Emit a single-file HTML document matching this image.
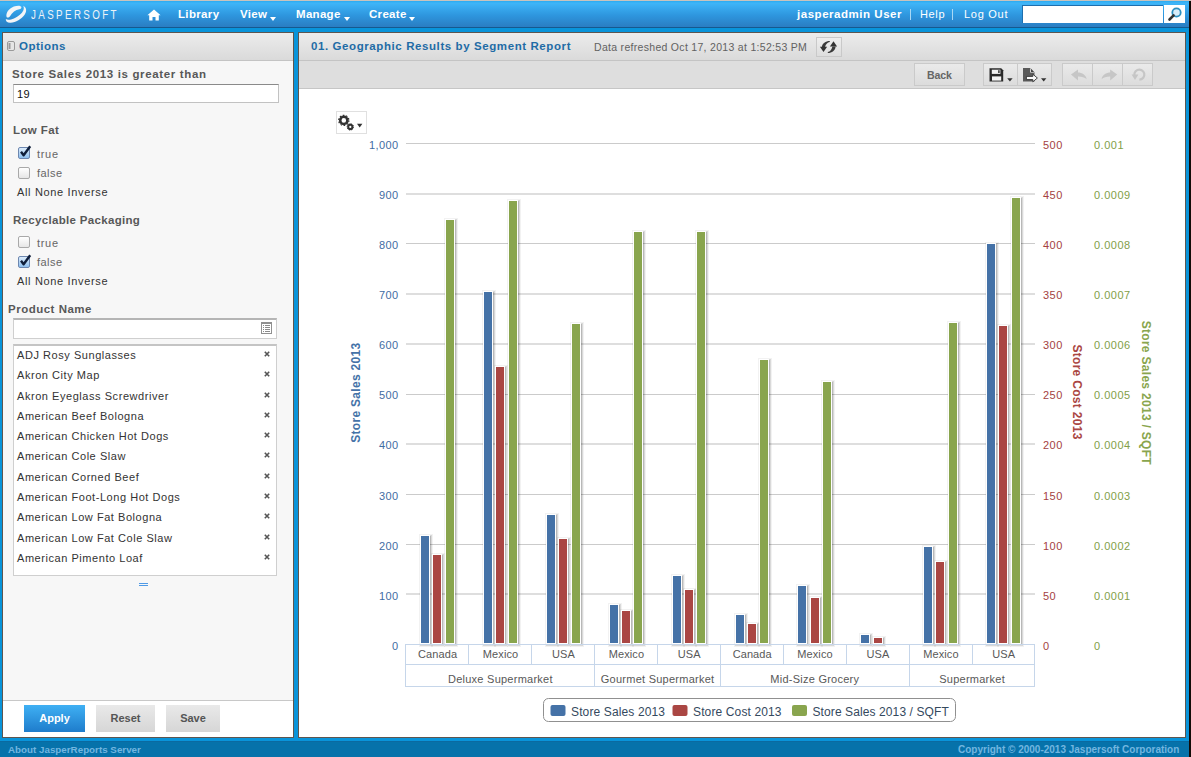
<!DOCTYPE html>
<html><head><meta charset="utf-8">
<style>
*{box-sizing:border-box}
html,body{margin:0;padding:0}
body{width:1191px;height:757px;overflow:hidden;position:relative;background:#0994da;font-family:"Liberation Sans",sans-serif;}
.a{position:absolute;white-space:nowrap}
#topline{left:0;top:0;width:1191px;height:1px;background:#c9c3bd}
#topbar{left:0;top:1px;width:1191px;height:26px;background:linear-gradient(#2aaaf0,#3fb5f8 8%,#2e96de 55%,#2a7dc2)}
#topdark{left:0;top:27px;width:1191px;height:1px;background:#15598f}
#rstrip{left:1189px;top:1px;width:2px;height:756px;background:#120c08}
#footer{left:0;top:742px;width:1189px;height:15px;background:#0672aa}
#footline{left:0;top:741px;width:1189px;height:1px;background:#0b6aa0}
.nav{color:#fff;font-weight:700;font-size:11.5px;top:8px;line-height:12px}
.panel{border:1px solid #5d5650;background:#f7f7f7}
.phdr{left:0;top:0;right:0;height:28px;background:linear-gradient(#ececec,#dadada);border-bottom:1px solid #c4c4c4}
.lbl{color:#585858;font-weight:700;font-size:11.5px;line-height:12px}
.opt{color:#666;font-size:11px;line-height:12px}
.ani{color:#333;font-size:11px;line-height:12px;letter-spacing:0.66px}
.cb{width:12px;height:12px;border:1px solid #a9a9a9;border-radius:2px;background:linear-gradient(#fff,#e6e6e6)}
.cbc{background:linear-gradient(#dcecfb,#8fc0ef);border-color:#6d87b0}
.item{color:#333;font-size:11px;line-height:12px;left:17px}
.tri{width:0;height:0;border-left:3px solid transparent;border-right:3px solid transparent;border-top:4px solid #fff}
.btn{font-weight:700;font-size:11px;line-height:27px;text-align:center;letter-spacing:0}
.x{left:264px;width:6px;height:6px}
</style></head><body>
<div class="a" id="topline"></div>
<div class="a" id="topbar"></div>
<div class="a" id="topdark"></div>
<div class="a" id="footline"></div>
<div class="a" id="footer"></div>
<div class="a" id="rstrip"></div>

<!-- logo -->
<svg class="a" style="left:0;top:0" width="30" height="26" viewBox="0 0 30 26">
<path d="M6.6 17 C5.6 13 8.6 8.8 13.8 6.6 C17 5.4 20.2 5.2 21.3 6.8 C21.8 8.4 20.6 9 19.4 9.2 C15.6 9.8 12 12.4 10 16.2 C9.2 17.6 7.2 18 6.6 17 Z" fill="#f3f5f7"/>
<path d="M23.2 5.8 C26.4 7.2 27.2 11 24.6 14.8 C21.6 19 15.8 22.4 10.6 22.8 C7.4 23 5.6 21.4 5.8 19 C7.5 20 10.5 19.8 14 18.4 C18.5 16.6 22 13.4 23.3 10.5 C24 8.8 24 7 23.2 5.8 Z" fill="#f3f5f7"/>
</svg>
<div class="a" style="left:31px;top:7px;color:#eef3f7;font-size:13.6px;letter-spacing:3.3px;line-height:16px;font-weight:400;transform:scaleX(0.72);transform-origin:0 0">JASPERSOFT</div>


<!-- nav -->
<svg class="a" style="left:147px;top:9px" width="14" height="12" viewBox="0 0 14 12">
<path d="M7 0.5 L13.6 6.2 L11.8 6.2 L11.8 11.5 L8.5 11.5 L8.5 8 L5.5 8 L5.5 11.5 L2.2 11.5 L2.2 6.2 L0.4 6.2 Z" fill="#fff"/>
</svg>
<div class="a nav" style="left:178px;letter-spacing:0.35px">Library</div>
<div class="a nav" style="left:240px;letter-spacing:0.3px">View</div>
<div class="a tri" style="left:270px;top:17px"></div>
<div class="a nav" style="left:296px;letter-spacing:0.3px">Manage</div>
<div class="a tri" style="left:344px;top:17px"></div>
<div class="a nav" style="left:369px;letter-spacing:0.3px">Create</div>
<div class="a tri" style="left:409px;top:17px"></div>
<div class="a nav" style="left:797px;letter-spacing:0.53px">jasperadmin User</div>
<div class="a" style="left:910px;top:9px;width:1px;height:11px;background:#a9d8f5"></div>
<div class="a nav" style="left:920px;font-weight:400;font-size:11px;letter-spacing:0.63px">Help</div>
<div class="a" style="left:952px;top:9px;width:1px;height:11px;background:#a9d8f5"></div>
<div class="a nav" style="left:964px;font-weight:400;font-size:11px;letter-spacing:0.73px">Log Out</div>
<div class="a" style="left:1022px;top:5px;width:141px;height:18px;background:#fff;border:1px solid #1e6fae;border-width:1px 0 0 1px"></div>
<div class="a" style="left:1164px;top:5px;width:21px;height:18px;background:#fff"></div>
<svg class="a" style="left:1167px;top:7px" width="16" height="15" viewBox="0 0 16 15">
<circle cx="9.5" cy="5.5" r="4.2" fill="#d8ecf8" stroke="#2b8fc0" stroke-width="1.8"/>
<path d="M6.6 8.4 L2.5 12.5" stroke="#333" stroke-width="2.6" stroke-linecap="round"/>
</svg>

<!-- left panel -->
<div class="a panel" style="left:2px;top:32px;width:292px;height:706px">
  <div class="a phdr"></div>
  <div class="a" style="left:0;top:667px;width:290px;height:37px;background:#fff;border-top:1px solid #c8c8c8"></div>
</div>
<svg class="a" style="left:7px;top:41px" width="8" height="10" viewBox="0 0 8 10">
<rect x="0.5" y="0.5" width="7" height="9" rx="1.5" fill="#e6e6e6" stroke="#9a9a9a"/>
<rect x="1.5" y="2" width="2" height="6" fill="#9a9a9a"/>
</svg>
<div class="a" style="left:19px;top:40px;color:#1b6ca8;font-weight:700;font-size:11.5px;line-height:12px;letter-spacing:0.5px">Options</div>
<div class="a lbl" style="left:12px;top:68px;letter-spacing:0.65px">Store Sales 2013 is greater than</div>
<div class="a" style="left:13px;top:84px;width:266px;height:19px;background:#fff;border:1px solid #c2c2c2;border-top-color:#8a8a8a"></div>
<div class="a" style="left:17px;top:88px;color:#111;font-size:11px;line-height:12px;letter-spacing:0.5px">19</div>

<div class="a lbl" style="left:13px;top:124px;letter-spacing:0.4px">Low Fat</div>
<div class="a cb cbc" style="left:18px;top:147px"></div>
<div class="a opt" style="left:37px;top:148px;letter-spacing:0.7px">true</div>
<div class="a cb" style="left:18px;top:167px"></div>
<div class="a opt" style="left:37px;top:167px;letter-spacing:0.45px">false</div>
<div class="a ani" style="left:17px;top:186px">All None Inverse</div>

<div class="a lbl" style="left:13px;top:214px;letter-spacing:0.32px">Recyclable Packaging</div>
<div class="a cb" style="left:18px;top:236px"></div>
<div class="a opt" style="left:37px;top:237px;letter-spacing:0.7px">true</div>
<div class="a cb cbc" style="left:18px;top:256px"></div>
<div class="a opt" style="left:37px;top:256px;letter-spacing:0.45px">false</div>
<div class="a ani" style="left:17px;top:275px">All None Inverse</div>

<div class="a lbl" style="left:8px;top:303px;letter-spacing:0.5px">Product Name</div>
<div class="a" style="left:13px;top:318px;width:264px;height:21px;background:#fff;border:1px solid #cfcfcf;border-top:2px solid #b5b5b5"></div>
<div class="a" style="left:13px;top:344px;width:264px;height:232px;background:#fff;border:1px solid #cfcfcf;border-top:2px solid #c4c4c4"></div>
<div class="a item" style="top:349px;letter-spacing:0.55px">ADJ Rosy Sunglasses</div>
<svg class="a x" style="top:351px" viewBox="0 0 6 6"><path d="M0.8 0.8 L5.2 5.2 M5.2 0.8 L0.8 5.2" stroke="#555" stroke-width="1.6"/></svg>
<div class="a item" style="top:369px;letter-spacing:0.55px">Akron City Map</div>
<svg class="a x" style="top:371px" viewBox="0 0 6 6"><path d="M0.8 0.8 L5.2 5.2 M5.2 0.8 L0.8 5.2" stroke="#555" stroke-width="1.6"/></svg>
<div class="a item" style="top:390px;letter-spacing:0.55px">Akron Eyeglass Screwdriver</div>
<svg class="a x" style="top:392px" viewBox="0 0 6 6"><path d="M0.8 0.8 L5.2 5.2 M5.2 0.8 L0.8 5.2" stroke="#555" stroke-width="1.6"/></svg>
<div class="a item" style="top:410px;letter-spacing:0.55px">American Beef Bologna</div>
<svg class="a x" style="top:412px" viewBox="0 0 6 6"><path d="M0.8 0.8 L5.2 5.2 M5.2 0.8 L0.8 5.2" stroke="#555" stroke-width="1.6"/></svg>
<div class="a item" style="top:430px;letter-spacing:0.55px">American Chicken Hot Dogs</div>
<svg class="a x" style="top:432px" viewBox="0 0 6 6"><path d="M0.8 0.8 L5.2 5.2 M5.2 0.8 L0.8 5.2" stroke="#555" stroke-width="1.6"/></svg>
<div class="a item" style="top:450px;letter-spacing:0.55px">American Cole Slaw</div>
<svg class="a x" style="top:452px" viewBox="0 0 6 6"><path d="M0.8 0.8 L5.2 5.2 M5.2 0.8 L0.8 5.2" stroke="#555" stroke-width="1.6"/></svg>
<div class="a item" style="top:471px;letter-spacing:0.55px">American Corned Beef</div>
<svg class="a x" style="top:473px" viewBox="0 0 6 6"><path d="M0.8 0.8 L5.2 5.2 M5.2 0.8 L0.8 5.2" stroke="#555" stroke-width="1.6"/></svg>
<div class="a item" style="top:491px;letter-spacing:0.55px">American Foot-Long Hot Dogs</div>
<svg class="a x" style="top:493px" viewBox="0 0 6 6"><path d="M0.8 0.8 L5.2 5.2 M5.2 0.8 L0.8 5.2" stroke="#555" stroke-width="1.6"/></svg>
<div class="a item" style="top:511px;letter-spacing:0.55px">American Low Fat Bologna</div>
<svg class="a x" style="top:513px" viewBox="0 0 6 6"><path d="M0.8 0.8 L5.2 5.2 M5.2 0.8 L0.8 5.2" stroke="#555" stroke-width="1.6"/></svg>
<div class="a item" style="top:532px;letter-spacing:0.55px">American Low Fat Cole Slaw</div>
<svg class="a x" style="top:534px" viewBox="0 0 6 6"><path d="M0.8 0.8 L5.2 5.2 M5.2 0.8 L0.8 5.2" stroke="#555" stroke-width="1.6"/></svg>
<div class="a item" style="top:552px;letter-spacing:0.55px">American Pimento Loaf</div>
<svg class="a x" style="top:554px" viewBox="0 0 6 6"><path d="M0.8 0.8 L5.2 5.2 M5.2 0.8 L0.8 5.2" stroke="#555" stroke-width="1.6"/></svg>

<div class="a" style="left:139px;top:583px;width:9px;height:1px;background:#4f9ae6"></div>
<div class="a" style="left:139px;top:585px;width:9px;height:1px;background:#4f9ae6"></div>
<div class="a btn" style="left:24px;top:705px;width:61px;height:27px;background:linear-gradient(#3fb0f4,#1e7ccb);color:#fff">Apply</div>
<div class="a btn" style="left:96px;top:705px;width:59px;height:27px;background:linear-gradient(#e9e9e9,#d6d6d6);color:#555">Reset</div>
<div class="a btn" style="left:166px;top:705px;width:54px;height:27px;background:linear-gradient(#e9e9e9,#d6d6d6);color:#555">Save</div>
<div class="a" style="left:8px;top:745px;color:#72b6e0;font-weight:700;font-size:9.8px;line-height:10px">About JasperReports Server</div>
<div class="a" style="left:958px;top:745px;color:#72b6e0;font-weight:700;font-size:10px;line-height:10px">Copyright © 2000-2013 Jaspersoft Corporation</div>

<!-- right panel -->
<div class="a panel" style="left:298px;top:32px;width:888px;height:706px;background:#fff">
  <div class="a phdr"></div>
  <div class="a" style="left:0;top:28px;width:886px;height:28px;background:#dedede;border-bottom:1px solid #c6c6c6"></div>
</div>
<div class="a" style="left:311px;top:40px;color:#1f6ca6;font-weight:700;font-size:11.5px;line-height:12px;letter-spacing:0.59px">01. Geographic Results by Segment Report</div>
<div class="a" style="left:594px;top:41px;color:#626262;font-size:10.5px;line-height:12px;letter-spacing:0.3px">Data refreshed Oct 17, 2013 at 1:52:53 PM</div>
<div class="a" style="left:816px;top:37px;width:26px;height:20px;border:1px solid #c9c9c9;background:linear-gradient(#eee,#ddd)"></div>
<div class="a" style="left:914px;top:63px;width:51px;height:23px;border:1px solid #cacaca;background:linear-gradient(#eaeaea,#dcdcdc)"></div>
<div class="a" style="left:927px;top:69px;color:#666;font-weight:700;font-size:10.6px;line-height:12px;letter-spacing:-0.15px">Back</div>
<div class="a" style="left:983px;top:63px;width:69px;height:23px;border:1px solid #cacaca;background:linear-gradient(#eaeaea,#dcdcdc)"></div>
<div class="a" style="left:1017px;top:64px;width:1px;height:21px;background:#cacaca"></div>
<div class="a" style="left:1062px;top:63px;width:91px;height:23px;border:1px solid #cacaca;background:linear-gradient(#eaeaea,#dcdcdc)"></div>
<div class="a" style="left:1092px;top:64px;width:1px;height:21px;background:#cacaca"></div>
<div class="a" style="left:1122px;top:64px;width:1px;height:21px;background:#cacaca"></div>
<div class="a" style="left:336px;top:111px;width:31px;height:23px;border:1px solid #e0e0e0;background:#fff"></div>

<!-- icons -->
<svg class="a" style="left:816px;top:37px" width="26" height="20" viewBox="0 0 26 20">
<path d="M13.8 4 C9.6 4 6.2 6.4 5.9 10 L9.1 10 C9.6 7.2 11.4 5.5 13.8 5 Z" fill="#3a3a3a"/>
<path d="M3.9 9.8 L11.1 9.8 L7.5 15 Z" fill="#333"/>
<path d="M11.8 15.9 C16 15.9 19.4 13.4 19.6 9.4 L16.4 9.4 C15.8 12.5 14.2 14.5 11.8 14.9 Z" fill="#3a3a3a"/>
<path d="M13.9 9.4 L21.1 9.4 L17.5 4.2 Z" fill="#333"/>
</svg>
<svg class="a" style="left:988px;top:67px" width="26" height="16" viewBox="0 0 26 16">
<path d="M1.5 1.2 L13.2 1.2 L15.2 3.2 L15.2 14.6 L1.5 14.6 Z" fill="#2a2a2a"/>
<rect x="3.8" y="2.7" width="8.6" height="4.2" fill="#f2f2f2"/>
<rect x="10.2" y="3.2" width="1.4" height="2.8" fill="#2a2a2a"/>
<rect x="4" y="9.4" width="9.2" height="4.2" fill="#f4f4f4"/>
<path d="M19.2 11.2 L24.6 11.2 L21.9 14.6 Z" fill="#333"/>
</svg>
<svg class="a" style="left:1022px;top:67px" width="26" height="16" viewBox="0 0 26 16">
<path d="M1 1 L8 1 L12.5 5.5 L12.5 14.6 L1 14.6 Z" fill="#5a5a5a"/>
<path d="M8.2 1.2 L12.6 5.6 L8.2 5.6 Z" fill="#fff"/>
<path d="M8.8 1.6 L12.2 5 L9 5 Z" fill="#444"/>
<path d="M4.4 9.4 L10.8 9.4 L10.8 7.2 L15.4 11 L10.8 14.8 L10.8 12.6 L4.4 12.6 Z" fill="#fafafa" stroke="#333" stroke-width="0.9"/>
<path d="M19 11.2 L24.4 11.2 L21.7 14.6 Z" fill="#333"/>
</svg>
<svg class="a" style="left:1066px;top:66px" width="24" height="18" viewBox="0 0 24 18">
<path d="M5 8.4 L12 3.4 L12 14.4 Z" fill="#c6c6c6"/>
<path d="M11 6.6 C16 6.4 19.8 8.8 20.6 13.2 C18.6 11.2 15.2 10.4 11 10.6 Z" fill="#c6c6c6"/>
</svg>
<svg class="a" style="left:1096px;top:66px" width="24" height="18" viewBox="0 0 24 18">
<path d="M21.2 8.4 L14.2 3.4 L14.2 14.4 Z" fill="#c6c6c6"/>
<path d="M15.2 6.6 C10.2 6.4 6.4 8.8 5.6 13.2 C7.6 11.2 11 10.4 15.2 10.6 Z" fill="#c6c6c6"/>
</svg>
<svg class="a" style="left:1126px;top:66px" width="24" height="18" viewBox="0 0 24 18">
<path d="M9.2 11.4 A5 5 0 1 1 13.4 13.6" fill="none" stroke="#c6c6c6" stroke-width="2.2"/>
<path d="M5.6 8.6 L12.4 8.6 L9 14 Z" fill="#c6c6c6"/>
</svg>
<svg class="a" style="left:336px;top:111px" width="31" height="23" viewBox="0 0 31 23">
<circle cx="7.8" cy="9.4" r="3.6" fill="none" stroke="#333" stroke-width="2.6"/>
<circle cx="7.8" cy="9.4" r="5.1" fill="none" stroke="#333" stroke-width="1.2" stroke-dasharray="1.6 1.6"/>
<circle cx="14.3" cy="15.9" r="2.1" fill="none" stroke="#333" stroke-width="2"/>
<circle cx="14.3" cy="15.9" r="3.2" fill="none" stroke="#333" stroke-width="1" stroke-dasharray="1.3 1.2"/>
<path d="M21 12.8 L26.4 12.8 L23.7 16.6 Z" fill="#333"/>
</svg>
<svg class="a" style="left:261px;top:322px" width="11" height="12" viewBox="0 0 11 12">
<rect x="0.5" y="0.5" width="10" height="11" fill="#fff" stroke="#909090"/>
<rect x="0" y="0" width="11" height="2" fill="#909090"/>
<g fill="#8a8a8a"><rect x="2" y="3" width="1" height="1"/><rect x="2" y="5" width="1" height="1"/><rect x="2" y="7" width="1" height="1"/><rect x="2" y="9" width="1" height="1"/>
<rect x="4" y="3" width="5" height="1"/><rect x="4" y="5" width="5" height="1"/><rect x="4" y="7" width="5" height="1"/><rect x="4" y="9" width="5" height="1"/></g>
</svg>
<svg class="a" style="left:17px;top:144px" width="16" height="16" viewBox="0 0 16 16"><path d="M4 7.8 L6.6 11.2 L13.2 2.2" fill="none" stroke="#0f1e3a" stroke-width="2.4" stroke-linejoin="round"/></svg>
<svg class="a" style="left:17px;top:253px" width="16" height="16" viewBox="0 0 16 16"><path d="M4 7.8 L6.6 11.2 L13.2 2.2" fill="none" stroke="#0f1e3a" stroke-width="2.4" stroke-linejoin="round"/></svg>
<!-- chart -->
<svg class="a" style="left:0;top:0" width="1191" height="757" viewBox="0 0 1191 757" font-family="Liberation Sans">
<line x1="406" y1="143.5" x2="1035" y2="143.5" stroke="#cbcbcb" stroke-width="1"/>
<line x1="406" y1="194.0" x2="1035" y2="194.0" stroke="#bdbdbd" stroke-width="1"/>
<line x1="406" y1="243.5" x2="1035" y2="243.5" stroke="#cbcbcb" stroke-width="1"/>
<line x1="406" y1="294.0" x2="1035" y2="294.0" stroke="#bdbdbd" stroke-width="1"/>
<line x1="406" y1="344.0" x2="1035" y2="344.0" stroke="#bdbdbd" stroke-width="1"/>
<line x1="406" y1="394.5" x2="1035" y2="394.5" stroke="#cbcbcb" stroke-width="1"/>
<line x1="406" y1="444.0" x2="1035" y2="444.0" stroke="#bdbdbd" stroke-width="1"/>
<line x1="406" y1="494.5" x2="1035" y2="494.5" stroke="#cbcbcb" stroke-width="1"/>
<line x1="406" y1="544.5" x2="1035" y2="544.5" stroke="#cbcbcb" stroke-width="1"/>
<line x1="406" y1="594.0" x2="1035" y2="594.0" stroke="#bdbdbd" stroke-width="1"/>
<text x="398.5" y="149.0" text-anchor="end" font-size="11" fill="#3f6ca3" letter-spacing="0.4">1,000</text>
<text x="398.5" y="199.08" text-anchor="end" font-size="11" fill="#3f6ca3" letter-spacing="0.4">900</text>
<text x="398.5" y="249.16" text-anchor="end" font-size="11" fill="#3f6ca3" letter-spacing="0.4">800</text>
<text x="398.5" y="299.24" text-anchor="end" font-size="11" fill="#3f6ca3" letter-spacing="0.4">700</text>
<text x="398.5" y="349.32" text-anchor="end" font-size="11" fill="#3f6ca3" letter-spacing="0.4">600</text>
<text x="398.5" y="399.4" text-anchor="end" font-size="11" fill="#3f6ca3" letter-spacing="0.4">500</text>
<text x="398.5" y="449.48" text-anchor="end" font-size="11" fill="#3f6ca3" letter-spacing="0.4">400</text>
<text x="398.5" y="499.56" text-anchor="end" font-size="11" fill="#3f6ca3" letter-spacing="0.4">300</text>
<text x="398.5" y="549.64" text-anchor="end" font-size="11" fill="#3f6ca3" letter-spacing="0.4">200</text>
<text x="398.5" y="599.72" text-anchor="end" font-size="11" fill="#3f6ca3" letter-spacing="0.4">100</text>
<text x="398.5" y="649.8" text-anchor="end" font-size="11" fill="#3f6ca3" letter-spacing="0.4">0</text>
<text x="1043" y="149.0" font-size="11" fill="#a4423f" letter-spacing="0.5">500</text>
<text x="1094" y="149.0" font-size="11" fill="#82a048" letter-spacing="0.5">0.001</text>
<text x="1043" y="199.08" font-size="11" fill="#a4423f" letter-spacing="0.5">450</text>
<text x="1094" y="199.08" font-size="11" fill="#82a048" letter-spacing="0.5">0.0009</text>
<text x="1043" y="249.16" font-size="11" fill="#a4423f" letter-spacing="0.5">400</text>
<text x="1094" y="249.16" font-size="11" fill="#82a048" letter-spacing="0.5">0.0008</text>
<text x="1043" y="299.24" font-size="11" fill="#a4423f" letter-spacing="0.5">350</text>
<text x="1094" y="299.24" font-size="11" fill="#82a048" letter-spacing="0.5">0.0007</text>
<text x="1043" y="349.32" font-size="11" fill="#a4423f" letter-spacing="0.5">300</text>
<text x="1094" y="349.32" font-size="11" fill="#82a048" letter-spacing="0.5">0.0006</text>
<text x="1043" y="399.4" font-size="11" fill="#a4423f" letter-spacing="0.5">250</text>
<text x="1094" y="399.4" font-size="11" fill="#82a048" letter-spacing="0.5">0.0005</text>
<text x="1043" y="449.48" font-size="11" fill="#a4423f" letter-spacing="0.5">200</text>
<text x="1094" y="449.48" font-size="11" fill="#82a048" letter-spacing="0.5">0.0004</text>
<text x="1043" y="499.56" font-size="11" fill="#a4423f" letter-spacing="0.5">150</text>
<text x="1094" y="499.56" font-size="11" fill="#82a048" letter-spacing="0.5">0.0003</text>
<text x="1043" y="549.64" font-size="11" fill="#a4423f" letter-spacing="0.5">100</text>
<text x="1094" y="549.64" font-size="11" fill="#82a048" letter-spacing="0.5">0.0002</text>
<text x="1043" y="599.72" font-size="11" fill="#a4423f" letter-spacing="0.5">50</text>
<text x="1094" y="599.72" font-size="11" fill="#82a048" letter-spacing="0.5">0.0001</text>
<text x="1043" y="649.8" font-size="11" fill="#a4423f" letter-spacing="0.5">0</text>
<text x="1094" y="649.8" font-size="11" fill="#82a048" letter-spacing="0.5">0</text>
<rect x="420.5" y="535.5" width="9" height="108" fill="none" stroke="rgba(0,0,0,0.05)" stroke-width="5" transform="translate(1,1)"/>
<rect x="420.5" y="535.5" width="9" height="108" fill="none" stroke="rgba(0,0,0,0.1)" stroke-width="3" transform="translate(1,1)"/>
<rect x="420.5" y="535.5" width="9" height="108" fill="none" stroke="rgba(0,0,0,0.15)" stroke-width="1" transform="translate(1,1)"/>
<rect x="420.5" y="535.5" width="9" height="108" fill="#4572a7" stroke="#fff" stroke-width="1"/>
<rect x="432.5" y="554.5" width="9" height="89" fill="none" stroke="rgba(0,0,0,0.05)" stroke-width="5" transform="translate(1,1)"/>
<rect x="432.5" y="554.5" width="9" height="89" fill="none" stroke="rgba(0,0,0,0.1)" stroke-width="3" transform="translate(1,1)"/>
<rect x="432.5" y="554.5" width="9" height="89" fill="none" stroke="rgba(0,0,0,0.15)" stroke-width="1" transform="translate(1,1)"/>
<rect x="432.5" y="554.5" width="9" height="89" fill="#aa4643" stroke="#fff" stroke-width="1"/>
<rect x="445.5" y="219.5" width="9" height="424" fill="none" stroke="rgba(0,0,0,0.05)" stroke-width="5" transform="translate(1,1)"/>
<rect x="445.5" y="219.5" width="9" height="424" fill="none" stroke="rgba(0,0,0,0.1)" stroke-width="3" transform="translate(1,1)"/>
<rect x="445.5" y="219.5" width="9" height="424" fill="none" stroke="rgba(0,0,0,0.15)" stroke-width="1" transform="translate(1,1)"/>
<rect x="445.5" y="219.5" width="9" height="424" fill="#89a54e" stroke="#fff" stroke-width="1"/>
<rect x="483.5" y="291.5" width="9" height="352" fill="none" stroke="rgba(0,0,0,0.05)" stroke-width="5" transform="translate(1,1)"/>
<rect x="483.5" y="291.5" width="9" height="352" fill="none" stroke="rgba(0,0,0,0.1)" stroke-width="3" transform="translate(1,1)"/>
<rect x="483.5" y="291.5" width="9" height="352" fill="none" stroke="rgba(0,0,0,0.15)" stroke-width="1" transform="translate(1,1)"/>
<rect x="483.5" y="291.5" width="9" height="352" fill="#4572a7" stroke="#fff" stroke-width="1"/>
<rect x="495.5" y="366.5" width="9" height="277" fill="none" stroke="rgba(0,0,0,0.05)" stroke-width="5" transform="translate(1,1)"/>
<rect x="495.5" y="366.5" width="9" height="277" fill="none" stroke="rgba(0,0,0,0.1)" stroke-width="3" transform="translate(1,1)"/>
<rect x="495.5" y="366.5" width="9" height="277" fill="none" stroke="rgba(0,0,0,0.15)" stroke-width="1" transform="translate(1,1)"/>
<rect x="495.5" y="366.5" width="9" height="277" fill="#aa4643" stroke="#fff" stroke-width="1"/>
<rect x="508.5" y="200.5" width="9" height="443" fill="none" stroke="rgba(0,0,0,0.05)" stroke-width="5" transform="translate(1,1)"/>
<rect x="508.5" y="200.5" width="9" height="443" fill="none" stroke="rgba(0,0,0,0.1)" stroke-width="3" transform="translate(1,1)"/>
<rect x="508.5" y="200.5" width="9" height="443" fill="none" stroke="rgba(0,0,0,0.15)" stroke-width="1" transform="translate(1,1)"/>
<rect x="508.5" y="200.5" width="9" height="443" fill="#89a54e" stroke="#fff" stroke-width="1"/>
<rect x="546.5" y="514.5" width="9" height="129" fill="none" stroke="rgba(0,0,0,0.05)" stroke-width="5" transform="translate(1,1)"/>
<rect x="546.5" y="514.5" width="9" height="129" fill="none" stroke="rgba(0,0,0,0.1)" stroke-width="3" transform="translate(1,1)"/>
<rect x="546.5" y="514.5" width="9" height="129" fill="none" stroke="rgba(0,0,0,0.15)" stroke-width="1" transform="translate(1,1)"/>
<rect x="546.5" y="514.5" width="9" height="129" fill="#4572a7" stroke="#fff" stroke-width="1"/>
<rect x="558.5" y="538.5" width="9" height="105" fill="none" stroke="rgba(0,0,0,0.05)" stroke-width="5" transform="translate(1,1)"/>
<rect x="558.5" y="538.5" width="9" height="105" fill="none" stroke="rgba(0,0,0,0.1)" stroke-width="3" transform="translate(1,1)"/>
<rect x="558.5" y="538.5" width="9" height="105" fill="none" stroke="rgba(0,0,0,0.15)" stroke-width="1" transform="translate(1,1)"/>
<rect x="558.5" y="538.5" width="9" height="105" fill="#aa4643" stroke="#fff" stroke-width="1"/>
<rect x="571.5" y="323.5" width="9" height="320" fill="none" stroke="rgba(0,0,0,0.05)" stroke-width="5" transform="translate(1,1)"/>
<rect x="571.5" y="323.5" width="9" height="320" fill="none" stroke="rgba(0,0,0,0.1)" stroke-width="3" transform="translate(1,1)"/>
<rect x="571.5" y="323.5" width="9" height="320" fill="none" stroke="rgba(0,0,0,0.15)" stroke-width="1" transform="translate(1,1)"/>
<rect x="571.5" y="323.5" width="9" height="320" fill="#89a54e" stroke="#fff" stroke-width="1"/>
<rect x="609.5" y="604.5" width="9" height="39" fill="none" stroke="rgba(0,0,0,0.05)" stroke-width="5" transform="translate(1,1)"/>
<rect x="609.5" y="604.5" width="9" height="39" fill="none" stroke="rgba(0,0,0,0.1)" stroke-width="3" transform="translate(1,1)"/>
<rect x="609.5" y="604.5" width="9" height="39" fill="none" stroke="rgba(0,0,0,0.15)" stroke-width="1" transform="translate(1,1)"/>
<rect x="609.5" y="604.5" width="9" height="39" fill="#4572a7" stroke="#fff" stroke-width="1"/>
<rect x="621.5" y="610.5" width="9" height="33" fill="none" stroke="rgba(0,0,0,0.05)" stroke-width="5" transform="translate(1,1)"/>
<rect x="621.5" y="610.5" width="9" height="33" fill="none" stroke="rgba(0,0,0,0.1)" stroke-width="3" transform="translate(1,1)"/>
<rect x="621.5" y="610.5" width="9" height="33" fill="none" stroke="rgba(0,0,0,0.15)" stroke-width="1" transform="translate(1,1)"/>
<rect x="621.5" y="610.5" width="9" height="33" fill="#aa4643" stroke="#fff" stroke-width="1"/>
<rect x="633.5" y="231.5" width="9" height="412" fill="none" stroke="rgba(0,0,0,0.05)" stroke-width="5" transform="translate(1,1)"/>
<rect x="633.5" y="231.5" width="9" height="412" fill="none" stroke="rgba(0,0,0,0.1)" stroke-width="3" transform="translate(1,1)"/>
<rect x="633.5" y="231.5" width="9" height="412" fill="none" stroke="rgba(0,0,0,0.15)" stroke-width="1" transform="translate(1,1)"/>
<rect x="633.5" y="231.5" width="9" height="412" fill="#89a54e" stroke="#fff" stroke-width="1"/>
<rect x="672.5" y="575.5" width="9" height="68" fill="none" stroke="rgba(0,0,0,0.05)" stroke-width="5" transform="translate(1,1)"/>
<rect x="672.5" y="575.5" width="9" height="68" fill="none" stroke="rgba(0,0,0,0.1)" stroke-width="3" transform="translate(1,1)"/>
<rect x="672.5" y="575.5" width="9" height="68" fill="none" stroke="rgba(0,0,0,0.15)" stroke-width="1" transform="translate(1,1)"/>
<rect x="672.5" y="575.5" width="9" height="68" fill="#4572a7" stroke="#fff" stroke-width="1"/>
<rect x="684.5" y="589.5" width="9" height="54" fill="none" stroke="rgba(0,0,0,0.05)" stroke-width="5" transform="translate(1,1)"/>
<rect x="684.5" y="589.5" width="9" height="54" fill="none" stroke="rgba(0,0,0,0.1)" stroke-width="3" transform="translate(1,1)"/>
<rect x="684.5" y="589.5" width="9" height="54" fill="none" stroke="rgba(0,0,0,0.15)" stroke-width="1" transform="translate(1,1)"/>
<rect x="684.5" y="589.5" width="9" height="54" fill="#aa4643" stroke="#fff" stroke-width="1"/>
<rect x="696.5" y="231.5" width="9" height="412" fill="none" stroke="rgba(0,0,0,0.05)" stroke-width="5" transform="translate(1,1)"/>
<rect x="696.5" y="231.5" width="9" height="412" fill="none" stroke="rgba(0,0,0,0.1)" stroke-width="3" transform="translate(1,1)"/>
<rect x="696.5" y="231.5" width="9" height="412" fill="none" stroke="rgba(0,0,0,0.15)" stroke-width="1" transform="translate(1,1)"/>
<rect x="696.5" y="231.5" width="9" height="412" fill="#89a54e" stroke="#fff" stroke-width="1"/>
<rect x="735.5" y="614.5" width="9" height="29" fill="none" stroke="rgba(0,0,0,0.05)" stroke-width="5" transform="translate(1,1)"/>
<rect x="735.5" y="614.5" width="9" height="29" fill="none" stroke="rgba(0,0,0,0.1)" stroke-width="3" transform="translate(1,1)"/>
<rect x="735.5" y="614.5" width="9" height="29" fill="none" stroke="rgba(0,0,0,0.15)" stroke-width="1" transform="translate(1,1)"/>
<rect x="735.5" y="614.5" width="9" height="29" fill="#4572a7" stroke="#fff" stroke-width="1"/>
<rect x="747.5" y="623.5" width="9" height="20" fill="none" stroke="rgba(0,0,0,0.05)" stroke-width="5" transform="translate(1,1)"/>
<rect x="747.5" y="623.5" width="9" height="20" fill="none" stroke="rgba(0,0,0,0.1)" stroke-width="3" transform="translate(1,1)"/>
<rect x="747.5" y="623.5" width="9" height="20" fill="none" stroke="rgba(0,0,0,0.15)" stroke-width="1" transform="translate(1,1)"/>
<rect x="747.5" y="623.5" width="9" height="20" fill="#aa4643" stroke="#fff" stroke-width="1"/>
<rect x="759.5" y="359.5" width="9" height="284" fill="none" stroke="rgba(0,0,0,0.05)" stroke-width="5" transform="translate(1,1)"/>
<rect x="759.5" y="359.5" width="9" height="284" fill="none" stroke="rgba(0,0,0,0.1)" stroke-width="3" transform="translate(1,1)"/>
<rect x="759.5" y="359.5" width="9" height="284" fill="none" stroke="rgba(0,0,0,0.15)" stroke-width="1" transform="translate(1,1)"/>
<rect x="759.5" y="359.5" width="9" height="284" fill="#89a54e" stroke="#fff" stroke-width="1"/>
<rect x="797.5" y="585.5" width="9" height="58" fill="none" stroke="rgba(0,0,0,0.05)" stroke-width="5" transform="translate(1,1)"/>
<rect x="797.5" y="585.5" width="9" height="58" fill="none" stroke="rgba(0,0,0,0.1)" stroke-width="3" transform="translate(1,1)"/>
<rect x="797.5" y="585.5" width="9" height="58" fill="none" stroke="rgba(0,0,0,0.15)" stroke-width="1" transform="translate(1,1)"/>
<rect x="797.5" y="585.5" width="9" height="58" fill="#4572a7" stroke="#fff" stroke-width="1"/>
<rect x="810.5" y="597.5" width="9" height="46" fill="none" stroke="rgba(0,0,0,0.05)" stroke-width="5" transform="translate(1,1)"/>
<rect x="810.5" y="597.5" width="9" height="46" fill="none" stroke="rgba(0,0,0,0.1)" stroke-width="3" transform="translate(1,1)"/>
<rect x="810.5" y="597.5" width="9" height="46" fill="none" stroke="rgba(0,0,0,0.15)" stroke-width="1" transform="translate(1,1)"/>
<rect x="810.5" y="597.5" width="9" height="46" fill="#aa4643" stroke="#fff" stroke-width="1"/>
<rect x="822.5" y="381.5" width="9" height="262" fill="none" stroke="rgba(0,0,0,0.05)" stroke-width="5" transform="translate(1,1)"/>
<rect x="822.5" y="381.5" width="9" height="262" fill="none" stroke="rgba(0,0,0,0.1)" stroke-width="3" transform="translate(1,1)"/>
<rect x="822.5" y="381.5" width="9" height="262" fill="none" stroke="rgba(0,0,0,0.15)" stroke-width="1" transform="translate(1,1)"/>
<rect x="822.5" y="381.5" width="9" height="262" fill="#89a54e" stroke="#fff" stroke-width="1"/>
<rect x="860.5" y="634.5" width="9" height="9" fill="none" stroke="rgba(0,0,0,0.05)" stroke-width="5" transform="translate(1,1)"/>
<rect x="860.5" y="634.5" width="9" height="9" fill="none" stroke="rgba(0,0,0,0.1)" stroke-width="3" transform="translate(1,1)"/>
<rect x="860.5" y="634.5" width="9" height="9" fill="none" stroke="rgba(0,0,0,0.15)" stroke-width="1" transform="translate(1,1)"/>
<rect x="860.5" y="634.5" width="9" height="9" fill="#4572a7" stroke="#fff" stroke-width="1"/>
<rect x="873.5" y="637.5" width="9" height="6" fill="none" stroke="rgba(0,0,0,0.05)" stroke-width="5" transform="translate(1,1)"/>
<rect x="873.5" y="637.5" width="9" height="6" fill="none" stroke="rgba(0,0,0,0.1)" stroke-width="3" transform="translate(1,1)"/>
<rect x="873.5" y="637.5" width="9" height="6" fill="none" stroke="rgba(0,0,0,0.15)" stroke-width="1" transform="translate(1,1)"/>
<rect x="873.5" y="637.5" width="9" height="6" fill="#aa4643" stroke="#fff" stroke-width="1"/>
<rect x="923.5" y="546.5" width="9" height="97" fill="none" stroke="rgba(0,0,0,0.05)" stroke-width="5" transform="translate(1,1)"/>
<rect x="923.5" y="546.5" width="9" height="97" fill="none" stroke="rgba(0,0,0,0.1)" stroke-width="3" transform="translate(1,1)"/>
<rect x="923.5" y="546.5" width="9" height="97" fill="none" stroke="rgba(0,0,0,0.15)" stroke-width="1" transform="translate(1,1)"/>
<rect x="923.5" y="546.5" width="9" height="97" fill="#4572a7" stroke="#fff" stroke-width="1"/>
<rect x="935.5" y="561.5" width="9" height="82" fill="none" stroke="rgba(0,0,0,0.05)" stroke-width="5" transform="translate(1,1)"/>
<rect x="935.5" y="561.5" width="9" height="82" fill="none" stroke="rgba(0,0,0,0.1)" stroke-width="3" transform="translate(1,1)"/>
<rect x="935.5" y="561.5" width="9" height="82" fill="none" stroke="rgba(0,0,0,0.15)" stroke-width="1" transform="translate(1,1)"/>
<rect x="935.5" y="561.5" width="9" height="82" fill="#aa4643" stroke="#fff" stroke-width="1"/>
<rect x="948.5" y="322.5" width="9" height="321" fill="none" stroke="rgba(0,0,0,0.05)" stroke-width="5" transform="translate(1,1)"/>
<rect x="948.5" y="322.5" width="9" height="321" fill="none" stroke="rgba(0,0,0,0.1)" stroke-width="3" transform="translate(1,1)"/>
<rect x="948.5" y="322.5" width="9" height="321" fill="none" stroke="rgba(0,0,0,0.15)" stroke-width="1" transform="translate(1,1)"/>
<rect x="948.5" y="322.5" width="9" height="321" fill="#89a54e" stroke="#fff" stroke-width="1"/>
<rect x="986.5" y="243.5" width="9" height="400" fill="none" stroke="rgba(0,0,0,0.05)" stroke-width="5" transform="translate(1,1)"/>
<rect x="986.5" y="243.5" width="9" height="400" fill="none" stroke="rgba(0,0,0,0.1)" stroke-width="3" transform="translate(1,1)"/>
<rect x="986.5" y="243.5" width="9" height="400" fill="none" stroke="rgba(0,0,0,0.15)" stroke-width="1" transform="translate(1,1)"/>
<rect x="986.5" y="243.5" width="9" height="400" fill="#4572a7" stroke="#fff" stroke-width="1"/>
<rect x="998.5" y="325.5" width="9" height="318" fill="none" stroke="rgba(0,0,0,0.05)" stroke-width="5" transform="translate(1,1)"/>
<rect x="998.5" y="325.5" width="9" height="318" fill="none" stroke="rgba(0,0,0,0.1)" stroke-width="3" transform="translate(1,1)"/>
<rect x="998.5" y="325.5" width="9" height="318" fill="none" stroke="rgba(0,0,0,0.15)" stroke-width="1" transform="translate(1,1)"/>
<rect x="998.5" y="325.5" width="9" height="318" fill="#aa4643" stroke="#fff" stroke-width="1"/>
<rect x="1011.5" y="197.5" width="9" height="446" fill="none" stroke="rgba(0,0,0,0.05)" stroke-width="5" transform="translate(1,1)"/>
<rect x="1011.5" y="197.5" width="9" height="446" fill="none" stroke="rgba(0,0,0,0.1)" stroke-width="3" transform="translate(1,1)"/>
<rect x="1011.5" y="197.5" width="9" height="446" fill="none" stroke="rgba(0,0,0,0.15)" stroke-width="1" transform="translate(1,1)"/>
<rect x="1011.5" y="197.5" width="9" height="446" fill="#89a54e" stroke="#fff" stroke-width="1"/>
<rect x="405.5" y="644.5" width="629" height="42" fill="none" stroke="#c6d6ea"/>
<line x1="405.5" y1="664.5" x2="1034.5" y2="664.5" stroke="#c6d6ea"/>
<line x1="468.5" y1="644.5" x2="468.5" y2="664.5" stroke="#c6d6ea"/>
<line x1="531.5" y1="644.5" x2="531.5" y2="664.5" stroke="#c6d6ea"/>
<line x1="594.5" y1="644.5" x2="594.5" y2="686.5" stroke="#c6d6ea"/>
<line x1="657.5" y1="644.5" x2="657.5" y2="664.5" stroke="#c6d6ea"/>
<line x1="720.5" y1="644.5" x2="720.5" y2="686.5" stroke="#c6d6ea"/>
<line x1="783.5" y1="644.5" x2="783.5" y2="664.5" stroke="#c6d6ea"/>
<line x1="846.5" y1="644.5" x2="846.5" y2="664.5" stroke="#c6d6ea"/>
<line x1="909.5" y1="644.5" x2="909.5" y2="686.5" stroke="#c6d6ea"/>
<line x1="972.5" y1="644.5" x2="972.5" y2="664.5" stroke="#c6d6ea"/>
<text x="437.6" y="657.5" text-anchor="middle" font-size="11" fill="#585858" letter-spacing="0.1">Canada</text>
<text x="500.6" y="657.5" text-anchor="middle" font-size="11" fill="#585858" letter-spacing="0.1">Mexico</text>
<text x="563.5" y="657.5" text-anchor="middle" font-size="11" fill="#585858" letter-spacing="0.1">USA</text>
<text x="626.4" y="657.5" text-anchor="middle" font-size="11" fill="#585858" letter-spacing="0.1">Mexico</text>
<text x="689.2" y="657.5" text-anchor="middle" font-size="11" fill="#585858" letter-spacing="0.1">USA</text>
<text x="752.2" y="657.5" text-anchor="middle" font-size="11" fill="#585858" letter-spacing="0.1">Canada</text>
<text x="815.0" y="657.5" text-anchor="middle" font-size="11" fill="#585858" letter-spacing="0.1">Mexico</text>
<text x="878.0" y="657.5" text-anchor="middle" font-size="11" fill="#585858" letter-spacing="0.1">USA</text>
<text x="940.9" y="657.5" text-anchor="middle" font-size="11" fill="#585858" letter-spacing="0.1">Mexico</text>
<text x="1003.8" y="657.5" text-anchor="middle" font-size="11" fill="#585858" letter-spacing="0.1">USA</text>
<text x="500.4" y="682.5" text-anchor="middle" font-size="11" fill="#585858" letter-spacing="0.25">Deluxe Supermarket</text>
<text x="657.6" y="682.5" text-anchor="middle" font-size="11" fill="#585858" letter-spacing="0.25">Gourmet Supermarket</text>
<text x="814.8" y="682.5" text-anchor="middle" font-size="11" fill="#585858" letter-spacing="0.25">Mid-Size Grocery</text>
<text x="972.1" y="682.5" text-anchor="middle" font-size="11" fill="#585858" letter-spacing="0.25">Supermarket</text>
<text x="0" y="0" transform="translate(360,392.7) rotate(-90)" text-anchor="middle" font-size="12" font-weight="700" fill="#4572a7" letter-spacing="0.3">Store Sales 2013</text>
<text x="0" y="0" transform="translate(1072.5,392) rotate(90)" text-anchor="middle" font-size="12" font-weight="700" fill="#aa4643" letter-spacing="0.3">Store Cost 2013</text>
<text x="0" y="0" transform="translate(1142,392.8) rotate(90)" text-anchor="middle" font-size="12" font-weight="700" fill="#89a54e" letter-spacing="0.3">Store Sales 2013 / SQFT</text>
<rect x="543.5" y="698.5" width="412" height="23" rx="5" ry="5" fill="#fff" stroke="#909090"/>
<rect x="550.5" y="705" width="15" height="11" rx="2" fill="#4572a7"/>
<text x="571" y="715.5" font-size="12" fill="#34495e" letter-spacing="0.13">Store Sales 2013</text>
<rect x="672.5" y="705" width="15" height="11" rx="2" fill="#aa4643"/>
<text x="693" y="715.5" font-size="12" fill="#34495e" letter-spacing="0.13">Store Cost 2013</text>
<rect x="792" y="705" width="15" height="11" rx="2" fill="#89a54e"/>
<text x="812.5" y="715.5" font-size="12" fill="#34495e" letter-spacing="0.1">Store Sales 2013 / SQFT</text>
</svg>
<!-- /chart -->
</body></html>
